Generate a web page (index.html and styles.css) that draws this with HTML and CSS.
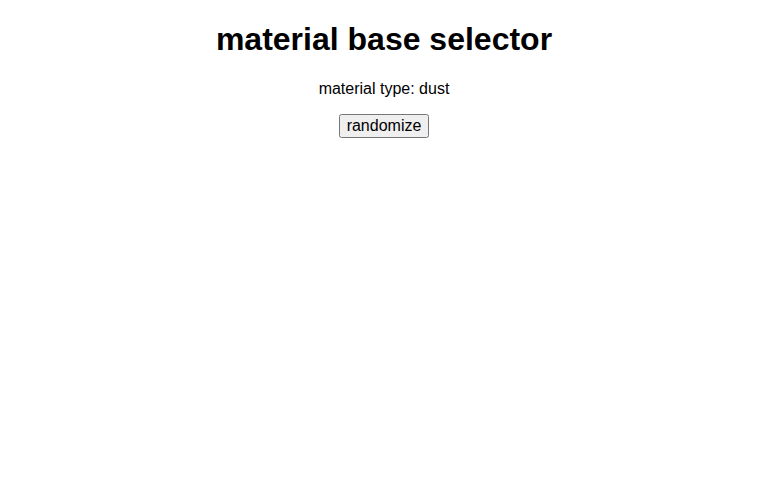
FILE: index.html
```html
<!DOCTYPE html>
<html lang="en">
<head>
    <meta charset="UTF-8">
    <meta name="viewport" content="width=device-width, initial-scale=1.0">
    <title>material base selector</title>
    <link rel="stylesheet" href="styles.css">
</head>
<body>
    <h1>material base selector</h1>
    <p id="material">material type: dust</p>
    <p><button id="randomize">randomize</button></p>

    <script>
        const materials = ['dust', 'sand', 'clay', 'stone', 'metal', 'wood', 'glass'];

        document.getElementById('randomize').addEventListener('click', function() {
            const pick = materials[Math.floor(Math.random() * materials.length)];
            document.getElementById('material').textContent = 'material type: ' + pick;
        });
    </script>
</body>
</html>
```

FILE: styles.css
```css
body {
    font-family: "Liberation Sans", Arial, sans-serif;
    text-align: center;
    margin: 0;
}

button {
    font-family: inherit;
    font-size: 16px;
}
```
